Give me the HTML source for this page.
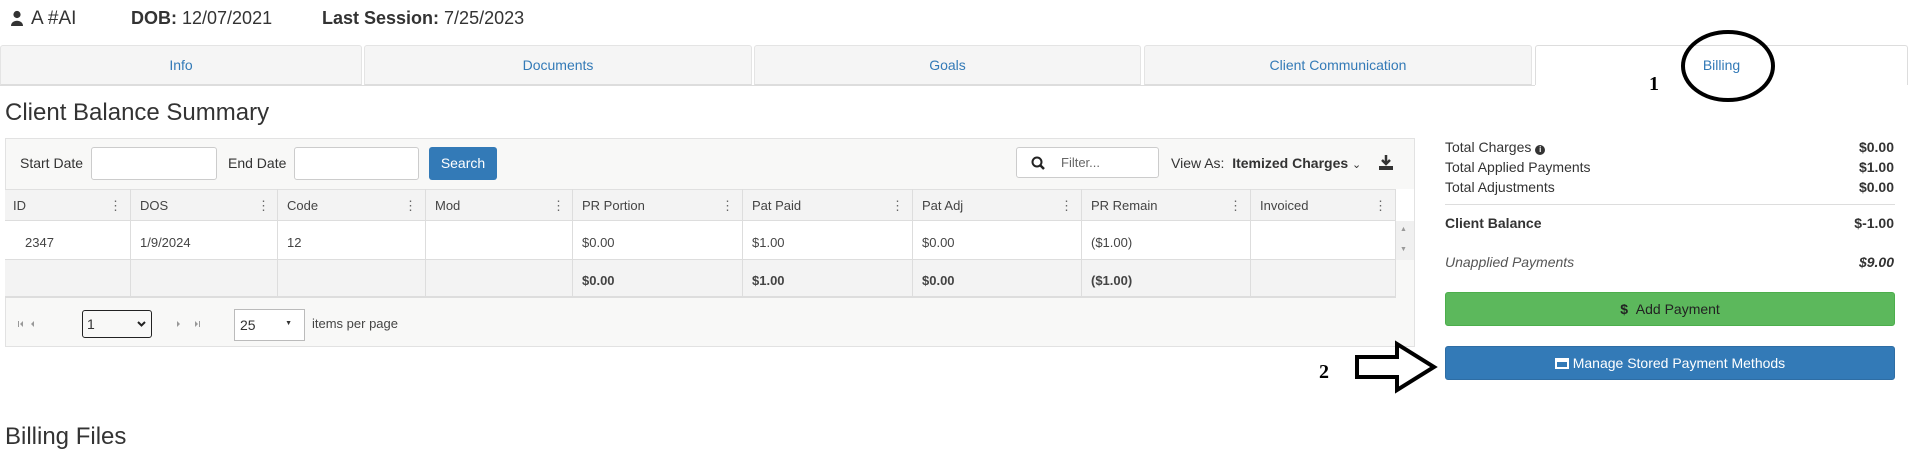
<!DOCTYPE html>
<html><head><meta charset="utf-8"><style>
*{box-sizing:border-box;margin:0;padding:0}
body{width:1908px;height:455px;overflow:hidden;background:#fff;font-family:"Liberation Sans",sans-serif;color:#333;position:relative}
.a{position:absolute}
.tab{position:absolute;top:45px;height:40px;background:#f5f5f5;border:1px solid #e4e4e4;border-bottom:1px solid #ddd;color:#337ab7;font-size:14px;text-align:center;line-height:38px;border-radius:3px 3px 0 0}
.inp{position:absolute;background:#fff;border:1px solid #ccc;border-radius:3px}
.lbl{position:absolute;font-size:14px;color:#333}
.cell{position:absolute;font-size:13px;color:#444;border-left:1px solid #ddd;padding-left:9px}
.r{position:absolute;font-size:14px;color:#333}
.rv{position:absolute;right:14px;font-size:14px;font-weight:bold;color:#333}
</style></head><body>
<svg class="a" style="left:10px;top:10px" width="14" height="16" viewBox="0 0 14 16"><circle cx="7" cy="4.5" r="3.6" fill="#333"/><path d="M1 16 C1 9 13 9 13 16Z" fill="#333"/></svg>
<div class="a" style="left:31px;top:8px;font-size:19px;color:#333">A #AI</div>
<div class="a" style="left:131px;top:8px;font-size:18px;color:#333"><b>DOB:</b> 12/07/2021</div>
<div class="a" style="left:322px;top:8px;font-size:18px;color:#333"><b>Last Session:</b> 7/25/2023</div>

<div class="a" style="left:0;top:85px;width:1535px;border-top:1px solid #ddd"></div>
<div class="tab" style="left:0;width:362px">Info</div>
<div class="tab" style="left:364px;width:388px">Documents</div>
<div class="tab" style="left:754px;width:387px">Goals</div>
<div class="tab" style="left:1144px;width:388px">Client Communication</div>
<div class="tab" style="left:1535px;width:373px;background:#fff;border-bottom:none;border-color:#ddd">Billing</div>
<svg class="a" style="left:1670px;top:28px" width="120" height="80"><ellipse cx="58" cy="38" rx="45" ry="34" fill="none" stroke="#000" stroke-width="4"/></svg>
<div class="a" style="left:1649px;top:73px;font-family:'Liberation Serif',serif;font-weight:bold;font-size:20px;color:#000">1</div>

<div class="a" style="left:5px;top:99px;font-size:24px;color:#333">Client Balance Summary</div>

<div class="a" style="left:5px;top:138px;width:1410px;height:209px;background:#f8f8f7;border:1px solid #e2e2e2"></div>
<div class="lbl" style="left:20px;top:155px">Start Date</div>
<div class="inp" style="left:91px;top:147px;width:126px;height:33px"></div>
<div class="lbl" style="left:228px;top:155px">End Date</div>
<div class="inp" style="left:294px;top:147px;width:125px;height:33px"></div>
<div class="a" style="left:429px;top:147px;width:68px;height:33px;background:#337ab7;border-radius:3px;color:#fff;font-size:14px;text-align:center;line-height:33px">Search</div>
<div class="inp" style="left:1016px;top:147px;width:143px;height:31px"></div>
<svg class="a" style="left:1031px;top:156px" width="14" height="14"><circle cx="6" cy="6" r="4.5" fill="none" stroke="#222" stroke-width="2"/><path d="M9 9L13 13" stroke="#222" stroke-width="2.5"/></svg>
<div class="lbl" style="left:1061px;top:155px;color:#666;font-size:13px">Filter...</div>
<div class="lbl" style="left:1171px;top:155px">View As:&nbsp; <b>Itemized Charges</b> <span style="font-size:11px">&#8964;</span></div>
<svg class="a" style="left:1378px;top:154px" width="16" height="17"><path d="M8 1V10M4 6L8 10L12 6" stroke="#333" stroke-width="2.5" fill="none"/><rect x="1" y="12" width="14" height="4" fill="#333"/></svg>

<div class="a" style="left:5px;top:189px;width:1391px;height:32px;background:#f3f3f3;border-top:1px solid #e0e0e0;border-bottom:1px solid #ddd"></div>
<div class="a" style="left:5px;top:221px;width:1391px;height:39px;background:#fff;border-bottom:1px solid #ddd"></div>
<div class="a" style="left:5px;top:260px;width:1391px;height:38px;background:#f3f3f3;border-bottom:2px solid #ddd"></div>
<div class="a" style="left:1396px;top:189px;width:18px;height:32px;background:#fff"></div>
<div class="a" style="left:1396px;top:221px;width:18px;height:39px;background:#f0f0f0"></div>
<div class="a" style="left:1400px;top:226px;font-size:7px;color:#999">▲</div>
<div class="a" style="left:1400px;top:246px;font-size:7px;color:#999">▼</div>

<div class="cell" style="left:5px;top:189px;width:125px;height:109px;border-left:none"><div style="position:absolute;top:9px;left:8px">ID</div><div style="position:absolute;top:46px;left:20px">2347</div></div>
<div class="cell" style="left:130px;top:189px;width:147px;height:109px"><div style="position:absolute;top:9px">DOS</div><div style="position:absolute;top:46px">1/9/2024</div></div>
<div class="cell" style="left:277px;top:189px;width:148px;height:109px"><div style="position:absolute;top:9px">Code</div><div style="position:absolute;top:46px">12</div></div>
<div class="cell" style="left:425px;top:189px;width:147px;height:109px"><div style="position:absolute;top:9px">Mod</div></div>
<div class="cell" style="left:572px;top:189px;width:170px;height:109px"><div style="position:absolute;top:9px">PR Portion</div><div style="position:absolute;top:46px">$0.00</div><div style="position:absolute;top:84px;font-weight:bold">$0.00</div></div>
<div class="cell" style="left:742px;top:189px;width:170px;height:109px"><div style="position:absolute;top:9px">Pat Paid</div><div style="position:absolute;top:46px">$1.00</div><div style="position:absolute;top:84px;font-weight:bold">$1.00</div></div>
<div class="cell" style="left:912px;top:189px;width:169px;height:109px"><div style="position:absolute;top:9px">Pat Adj</div><div style="position:absolute;top:46px">$0.00</div><div style="position:absolute;top:84px;font-weight:bold">$0.00</div></div>
<div class="cell" style="left:1081px;top:189px;width:169px;height:109px"><div style="position:absolute;top:9px">PR Remain</div><div style="position:absolute;top:46px">($1.00)</div><div style="position:absolute;top:84px;font-weight:bold">($1.00)</div></div>
<div class="cell" style="left:1250px;top:189px;width:146px;height:109px;border-right:1px solid #ddd"><div style="position:absolute;top:9px">Invoiced</div></div>
<div class="a" style="left:109px;top:198px;font-size:13px;color:#666">&#8942;</div>
<div class="a" style="left:257px;top:198px;font-size:13px;color:#666">&#8942;</div>
<div class="a" style="left:404px;top:198px;font-size:13px;color:#666">&#8942;</div>
<div class="a" style="left:552px;top:198px;font-size:13px;color:#666">&#8942;</div>
<div class="a" style="left:721px;top:198px;font-size:13px;color:#666">&#8942;</div>
<div class="a" style="left:891px;top:198px;font-size:13px;color:#666">&#8942;</div>
<div class="a" style="left:1060px;top:198px;font-size:13px;color:#666">&#8942;</div>
<div class="a" style="left:1229px;top:198px;font-size:13px;color:#666">&#8942;</div>
<div class="a" style="left:1374px;top:198px;font-size:13px;color:#666">&#8942;</div>

<svg class="a" style="left:18px;top:320px" width="40" height="8"><rect x="0" y="1" width="1" height="6" fill="#999"/><path d="M5 1L2 4L5 7Z" fill="#999"/><path d="M34 1L31 4L34 7Z" fill="#999" transform="translate(-18 0)"/></svg>
<div class="a" style="left:82px;top:310px;width:70px;height:28px;border:1px solid #222;border-radius:3px;background:#f8f8f7;font-size:14px;padding:5px 4px">1<svg style="position:absolute;right:5px;top:10px" width="9" height="6"><path d="M1 1L4.5 4.5L8 1" stroke="#222" stroke-width="2" fill="none"/></svg></div>
<svg class="a" style="left:176px;top:320px" width="30" height="8"><path d="M1 1L4 4L1 7Z" fill="#999"/><path d="M19 1L22 4L19 7Z" fill="#999"/><rect x="23" y="1" width="1" height="6" fill="#999"/></svg>
<div class="a" style="left:234px;top:309px;width:71px;height:32px;border:1px solid #bbb;background:#fff;font-size:14px;padding:7px 5px">25<span style="position:absolute;right:12px;top:10px;font-size:7px">▼</span></div>
<div class="a" style="left:312px;top:316px;font-size:13px;color:#444">items per page</div>

<div class="r" style="left:1445px;top:139px">Total Charges <span style="display:inline-block;width:10px;height:10px;border-radius:50%;background:#333;color:#fff;font-size:8px;text-align:center;line-height:10px;font-weight:bold">i</span></div>
<div class="rv" style="top:139px">$0.00</div>
<div class="r" style="left:1445px;top:159px">Total Applied Payments</div><div class="rv" style="top:159px">$1.00</div>
<div class="r" style="left:1445px;top:179px">Total Adjustments</div><div class="rv" style="top:179px">$0.00</div>
<div class="a" style="left:1445px;top:204px;width:450px;border-top:1px solid #ddd"></div>
<div class="r" style="left:1445px;top:215px;font-weight:bold">Client Balance</div><div class="rv" style="top:215px">$-1.00</div>
<div class="r" style="left:1445px;top:254px;font-style:italic;color:#555">Unapplied Payments</div><div class="rv" style="top:254px;font-style:italic">$9.00</div>
<div class="a" style="left:1445px;top:292px;width:450px;height:34px;background:#5cb85c;border:1px solid #4cae4c;border-radius:3px;color:#222;font-size:14px;text-align:center;line-height:32px"><b>$</b>&nbsp;&nbsp;Add Payment</div>
<div class="a" style="left:1445px;top:346px;width:450px;height:34px;background:#337ab7;border:1px solid #2e6da4;border-radius:3px;color:#fff;font-size:14px;text-align:center;line-height:32px"><span style="display:inline-block;width:14px;height:11px;border:2px solid #fff;border-top-width:4px;vertical-align:-1px"></span> Manage Stored Payment Methods</div>

<svg class="a" style="left:1352px;top:340px" width="90" height="54"><path d="M5 17H45V4L82 27L45 50V37H5Z" fill="#fff" stroke="#000" stroke-width="4" stroke-linejoin="miter"/></svg>
<div class="a" style="left:1319px;top:361px;font-family:'Liberation Serif',serif;font-weight:bold;font-size:20px;color:#000">2</div>

<div class="a" style="left:5px;top:423px;font-size:24px;color:#333">Billing Files</div>
</body></html>
